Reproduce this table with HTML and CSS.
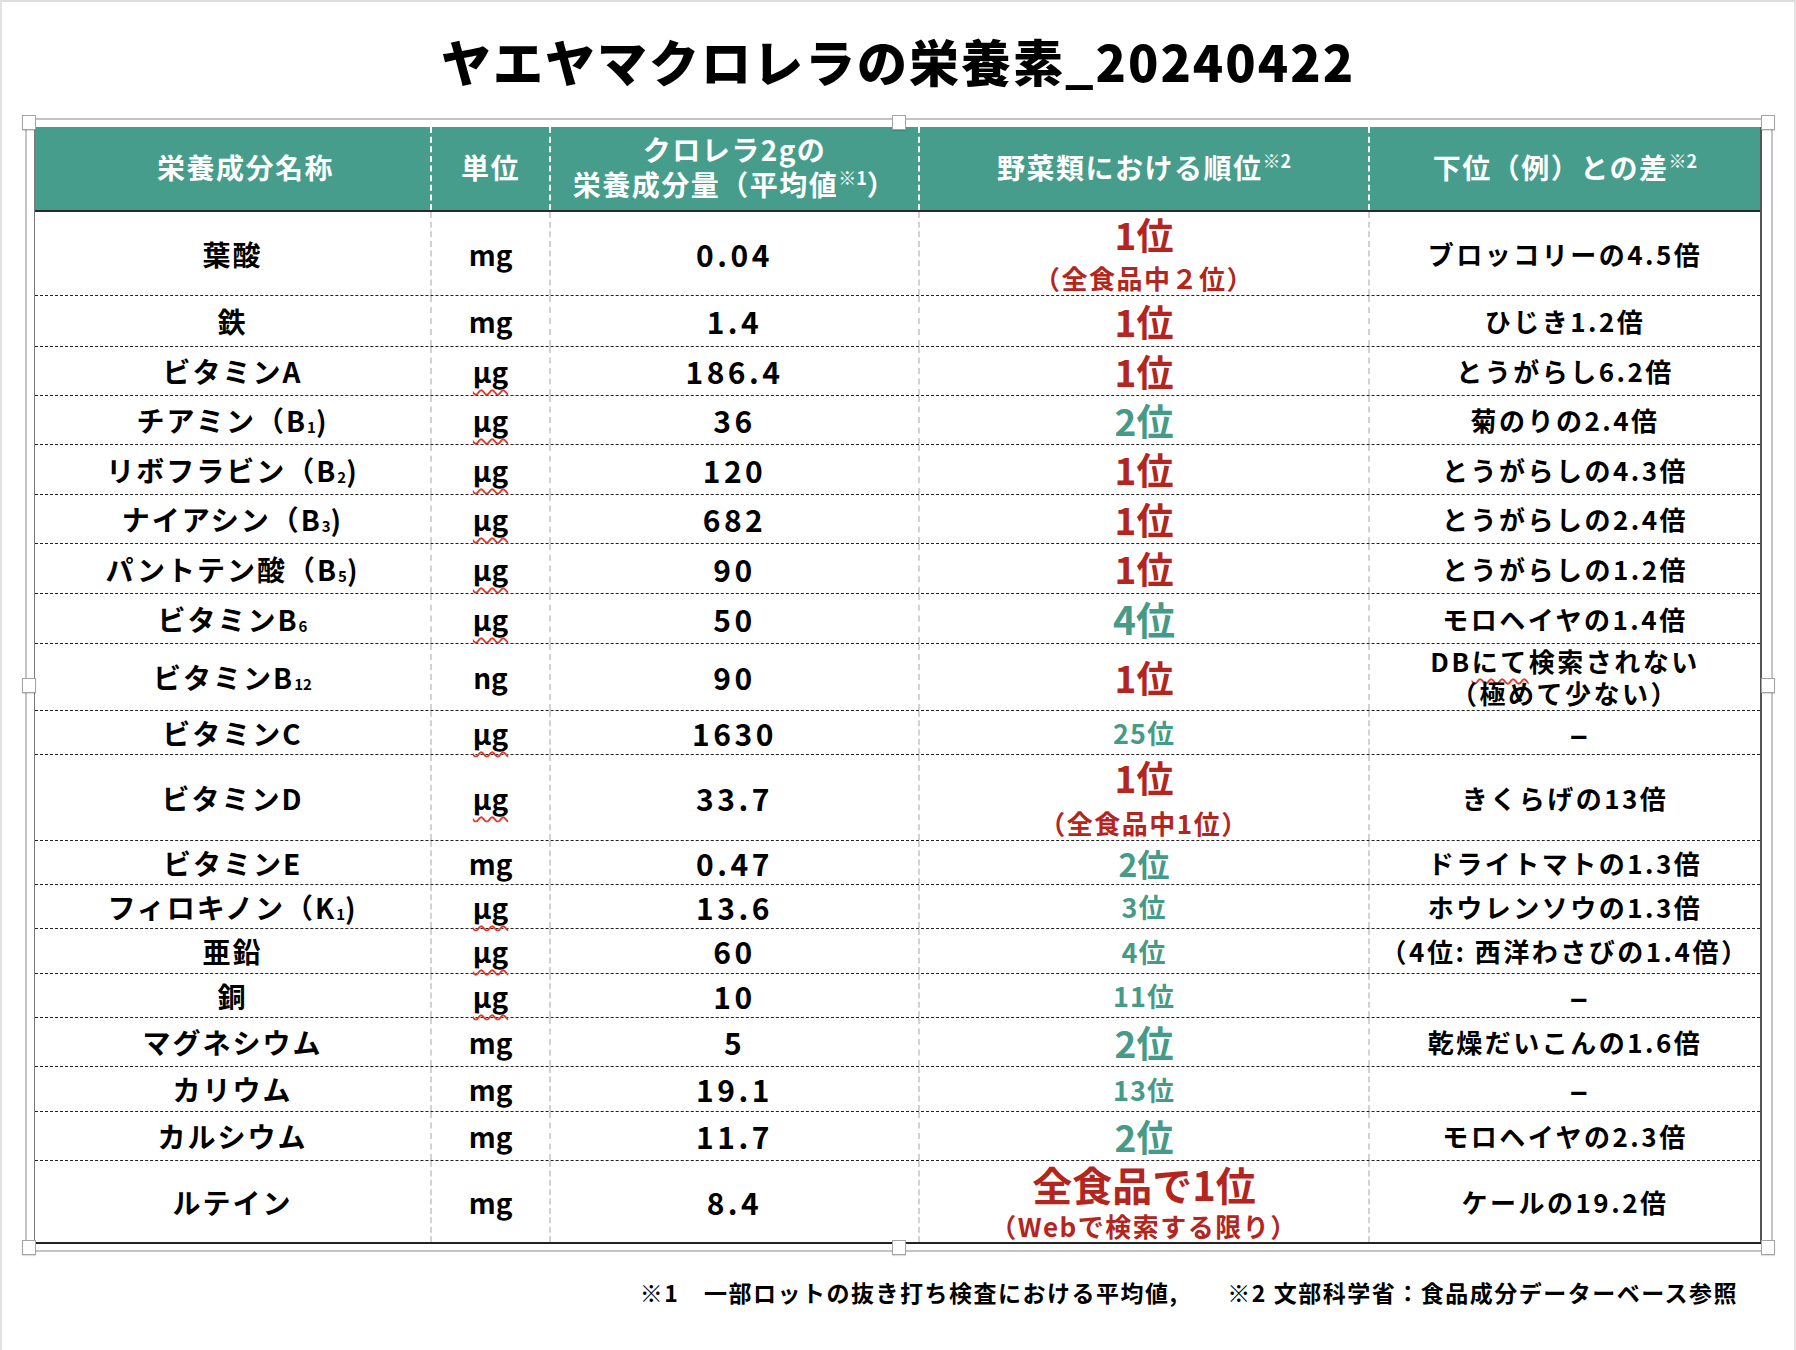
FILE: index.html
```html
<!DOCTYPE html>
<html lang="ja">
<head>
<meta charset="utf-8">
<title>ヤエヤマクロレラの栄養素</title>
<link rel="stylesheet" href="styles.css">
</head>
<body>
<div class="page">
  <h1 class="title">ヤエヤマクロレラの栄養素_20240422</h1>
  <div class="frame">
    <div class="table">
      <div class="row head">
        <div class="cell first"><span>栄養成分名称</span></div>
        <div class="cell"><span>単位</span></div>
        <div class="cell two"><span>クロレラ2gの</span><span>栄養成分量（平均値<sup>※1</sup>）</span></div>
        <div class="cell"><span>野菜類における順位<sup>※2</sup></span></div>
        <div class="cell"><span>下位（例）との差<sup>※2</sup></span></div>
      </div>
      <div class="row h84">
        <div class="cell name"><span>葉酸</span></div>
        <div class="cell unit"><span>mg</span></div>
        <div class="cell val"><span>0.04</span></div>
        <div class="cell rank"><span class="red lg">1位</span><span class="red note">（全食品中２位）</span></div>
        <div class="cell diff"><span>ブロッコリーの4.5倍</span></div>
      </div>
      <div class="row h51">
        <div class="cell name"><span>鉄</span></div>
        <div class="cell unit"><span>mg</span></div>
        <div class="cell val"><span>1.4</span></div>
        <div class="cell rank"><span class="red lg">1位</span></div>
        <div class="cell diff"><span>ひじき1.2倍</span></div>
      </div>
      <div class="row h49">
        <div class="cell name"><span>ビタミンA</span></div>
        <div class="cell unit"><span class="sq">µg</span></div>
        <div class="cell val"><span>186.4</span></div>
        <div class="cell rank"><span class="red lg">1位</span></div>
        <div class="cell diff"><span>とうがらし6.2倍</span></div>
      </div>
      <div class="row h49">
        <div class="cell name"><span>チアミン（B<span class="sub">1</span>)</span></div>
        <div class="cell unit"><span class="sq">µg</span></div>
        <div class="cell val"><span>36</span></div>
        <div class="cell rank"><span class="teal lg">2位</span></div>
        <div class="cell diff"><span>菊のりの2.4倍</span></div>
      </div>
      <div class="row h50">
        <div class="cell name"><span>リボフラビン（B<span class="sub">2</span>)</span></div>
        <div class="cell unit"><span class="sq">µg</span></div>
        <div class="cell val"><span>120</span></div>
        <div class="cell rank"><span class="red lg">1位</span></div>
        <div class="cell diff"><span>とうがらしの4.3倍</span></div>
      </div>
      <div class="row h49">
        <div class="cell name"><span>ナイアシン（B<span class="sub">3</span>)</span></div>
        <div class="cell unit"><span class="sq">µg</span></div>
        <div class="cell val"><span>682</span></div>
        <div class="cell rank"><span class="red lg">1位</span></div>
        <div class="cell diff"><span>とうがらしの2.4倍</span></div>
      </div>
      <div class="row h50">
        <div class="cell name"><span>パントテン酸（B<span class="sub">5</span>)</span></div>
        <div class="cell unit"><span class="sq">µg</span></div>
        <div class="cell val"><span>90</span></div>
        <div class="cell rank"><span class="red lg">1位</span></div>
        <div class="cell diff"><span>とうがらしの1.2倍</span></div>
      </div>
      <div class="row h50">
        <div class="cell name"><span>ビタミンB<span class="sub">6</span></span></div>
        <div class="cell unit"><span class="sq">µg</span></div>
        <div class="cell val"><span>50</span></div>
        <div class="cell rank"><span class="teal xl">4位</span></div>
        <div class="cell diff"><span>モロヘイヤの1.4倍</span></div>
      </div>
      <div class="row h67">
        <div class="cell name"><span>ビタミンB<span class="sub">12</span></span></div>
        <div class="cell unit"><span>ng</span></div>
        <div class="cell val"><span>90</span></div>
        <div class="cell rank"><span class="red lg">1位</span></div>
        <div class="cell diff two-line"><span>DB<span class="sq">にて</span>検索されない</span><span>（極めて少ない）</span></div>
      </div>
      <div class="row h44">
        <div class="cell name"><span>ビタミンC</span></div>
        <div class="cell unit"><span class="sq">µg</span></div>
        <div class="cell val"><span>1630</span></div>
        <div class="cell rank"><span class="teal sm">25位</span></div>
        <div class="cell diff"><span class="dash">–</span></div>
      </div>
      <div class="row h86">
        <div class="cell name"><span>ビタミンD</span></div>
        <div class="cell unit"><span class="sq">µg</span></div>
        <div class="cell val"><span>33.7</span></div>
        <div class="cell rank"><span class="red lg">1位</span><span class="red note gap">（全食品中1位）</span></div>
        <div class="cell diff"><span>きくらげの13倍</span></div>
      </div>
      <div class="row h44">
        <div class="cell name"><span>ビタミンE</span></div>
        <div class="cell unit"><span>mg</span></div>
        <div class="cell val"><span>0.47</span></div>
        <div class="cell rank"><span class="teal md">2位</span></div>
        <div class="cell diff"><span>ドライトマトの1.3倍</span></div>
      </div>
      <div class="row h44">
        <div class="cell name"><span>フィロキノン（K<span class="sub">1</span>)</span></div>
        <div class="cell unit"><span class="sq">µg</span></div>
        <div class="cell val"><span>13.6</span></div>
        <div class="cell rank"><span class="teal sm">3位</span></div>
        <div class="cell diff"><span>ホウレンソウの1.3倍</span></div>
      </div>
      <div class="row h45">
        <div class="cell name"><span>亜鉛</span></div>
        <div class="cell unit"><span class="sq">µg</span></div>
        <div class="cell val"><span>60</span></div>
        <div class="cell rank"><span class="teal sm">4位</span></div>
        <div class="cell diff"><span>（4位: 西洋わさびの1.4倍）</span></div>
      </div>
      <div class="row h44">
        <div class="cell name"><span>銅</span></div>
        <div class="cell unit"><span class="sq">µg</span></div>
        <div class="cell val"><span>10</span></div>
        <div class="cell rank"><span class="teal sm">11位</span></div>
        <div class="cell diff"><span class="dash">–</span></div>
      </div>
      <div class="row h49">
        <div class="cell name"><span>マグネシウム</span></div>
        <div class="cell unit"><span>mg</span></div>
        <div class="cell val"><span>5</span></div>
        <div class="cell rank"><span class="teal lg">2位</span></div>
        <div class="cell diff"><span>乾燥だいこんの1.6倍</span></div>
      </div>
      <div class="row h45">
        <div class="cell name"><span>カリウム</span></div>
        <div class="cell unit"><span>mg</span></div>
        <div class="cell val"><span>19.1</span></div>
        <div class="cell rank"><span class="teal sm">13位</span></div>
        <div class="cell diff"><span class="dash">–</span></div>
      </div>
      <div class="row h49">
        <div class="cell name"><span>カルシウム</span></div>
        <div class="cell unit"><span>mg</span></div>
        <div class="cell val"><span>11.7</span></div>
        <div class="cell rank"><span class="teal lg">2位</span></div>
        <div class="cell diff"><span>モロヘイヤの2.3倍</span></div>
      </div>
      <div class="row h81 last">
        <div class="cell name"><span>ルテイン</span></div>
        <div class="cell unit"><span>mg</span></div>
        <div class="cell val"><span>8.4</span></div>
        <div class="cell rank"><span class="red xxl">全食品で1位</span><span class="red note tight">（Webで検索する限り）</span></div>
        <div class="cell diff"><span>ケールの19.2倍</span></div>
      </div>
    </div>
    <span class="handle tl"></span>
    <span class="handle tm"></span>
    <span class="handle tr"></span>
    <span class="handle ml"></span>
    <span class="handle mr"></span>
    <span class="handle bl"></span>
    <span class="handle bm"></span>
    <span class="handle br"></span>
  </div>
  <p class="footnote">※1　一部ロットの抜き打ち検査における平均値,　　※2 文部科学省：食品成分データーベース参照</p>
</div>
</body>
</html>
```

FILE: styles.css
```css
* { box-sizing: border-box; }

html, body {
  margin: 0;
  padding: 0;
  background: #fff;
}

body {
  font-family: "Noto Sans CJK JP", "Noto Sans", sans-serif;
  font-weight: 700;
  color: #000;
}

.page {
  width: 1796px;
  height: 1350px;
  border-top: 2px solid #dcdcdc;
  border-left: 2px solid #e2e2e2;
  border-right: 2px solid #e2e2e2;
  overflow: hidden;
}

.title {
  margin: 0;
  height: 116px;
  display: flex;
  align-items: center;
  justify-content: center;
  font-size: 50px;
  line-height: 1;
  letter-spacing: 2px;
  font-weight: 900;
}

.frame {
  position: relative;
  margin: 0 21px 0 23px;
  border: 2px solid #c4c4c4;
  padding: 7px 9px 6px 7px;
}

.table {
  width: 1728px;
  border-left: 1px solid #7a7a7a;
  border-right: 2px solid #555;
  border-bottom: 2px solid #222;
}

.row {
  display: grid;
  grid-template-columns: 397px 119px 369px 450px 390px;
  border-bottom: 1px dashed #222;
}

.row.last { border-bottom: none; }

.cell {
  display: flex;
  flex-direction: column;
  align-items: center;
  justify-content: center;
  text-align: center;
  border-right: 2px dashed #d2d2d2;
  white-space: nowrap;
}

.cell:last-child { border-right: none; }

.head {
  height: 85px;
  background: #479d8b;
  color: #fff;
  border-bottom: 2px solid #2a2a2a;
  font-size: 28px;
  letter-spacing: 1.5px;
  line-height: 1;
}

.head .cell { border-right-color: #fff; padding-bottom: 4px; }

.head .first { padding-left: 26px; }

.head .two span { line-height: 35px; }

.head sup {
  font-size: 18px;
  vertical-align: 11px;
  line-height: 0;
  letter-spacing: 0;
}

.h44 { height: 44px; }
.h45 { height: 45px; }
.h49 { height: 49px; }
.h50 { height: 50px; }
.h51 { height: 51px; }
.h67 { height: 67px; }
.h81 { height: 81px; }
.h84 { height: 84px; }
.h86 { height: 86px; }

.name {
  font-size: 28px;
  letter-spacing: 2px;
  line-height: 1;
}

.unit {
  font-size: 28px;
  line-height: 1;
}

.val {
  font-size: 30px;
  letter-spacing: 3.5px;
  line-height: 1;
}

.diff {
  font-size: 26px;
  letter-spacing: 2.5px;
  line-height: 1;
}

.diff.two-line { line-height: 32px; }

.sub {
  font-size: 15px;
  letter-spacing: 0;
  vertical-align: -1px;
  line-height: 0;
}

.sq {
  text-decoration: underline wavy #e23b2e;
  text-decoration-thickness: 1.5px;
  text-decoration-skip-ink: none;
  text-underline-offset: 6px;
}

.dash {
  font-size: 34px;
  margin-left: 30px;
}

.rank { line-height: 1; }

.red { color: #b3251d; }
.teal { color: #459a88; }

.xxl { font-size: 40px; }
.xl { font-size: 39px; }
.lg { font-size: 37px; }
.md { font-size: 32px; }
.sm { font-size: 27px; letter-spacing: 1px; }

.note {
  font-size: 26px;
  letter-spacing: 1.5px;
  margin-top: 12px;
}

.note.gap { margin-top: 14px; }
.note.tight { margin-top: 9px; }

.handle {
  position: absolute;
  width: 14px;
  height: 15px;
  background: #fff;
  border: 1px solid #a3a3a3;
  box-shadow: 0 1px 1px rgba(0, 0, 0, 0.12);
}

.tl { left: -5px; top: -5px; }
.tm { left: calc(50% - 7px); top: -5px; }
.tr { right: -4px; top: -5px; }
.ml { left: -5px; top: calc(50% - 7px); }
.mr { right: -4px; top: calc(50% - 7px); }
.bl { left: -5px; bottom: -5px; }
.bm { left: calc(50% - 7px); bottom: -5px; }
.br { right: -4px; bottom: -5px; }

.footnote {
  margin: 25px 0 0 0;
  padding-right: 56px;
  text-align: right;
  font-size: 23px;
  line-height: 30px;
  letter-spacing: 1.5px;
}
```
